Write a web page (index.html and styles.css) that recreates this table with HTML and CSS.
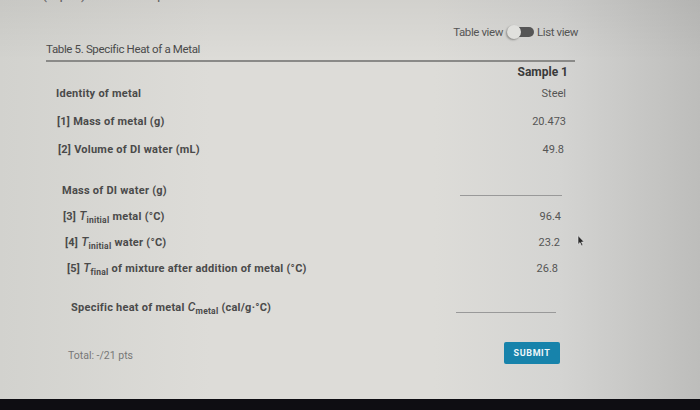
FILE: index.html
```html
<!DOCTYPE html>
<html>
<head>
<meta charset="utf-8">
<link rel="stylesheet" href="styles.css">
</head>
<body>
<div class="screen">
  <div class="cut-title">(4 pts) Table of Specific Heat of a Metal</div>
  <div class="toggle-row">
    <span class="toggle-label">Table view</span>
    <span class="switch"><span class="knob"></span></span>
    <span class="toggle-label">List view</span>
  </div>
  <div class="caption">Table 5. Specific Heat of a Metal</div>
  <div class="table">
    <div class="row head"><span class="label"></span><span class="value bold">Sample 1</span></div>
    <div class="group a">
      <div class="row r1"><span class="label">Identity of metal</span><span class="value">Steel</span></div>
      <div class="row r2"><span class="label">[1] Mass of metal (g)</span><span class="value">20.473</span></div>
      <div class="row r3"><span class="label">[2] Volume of DI water (mL)</span><span class="value">49.8</span></div>
    </div>
    <div class="group b">
      <div class="row r4"><span class="label">Mass of DI water (g)</span><span class="value"><span class="blank w102"></span></span></div>
      <div class="row r5"><span class="label">[3] <i>T</i><sub>initial</sub> metal (°C)</span><span class="value">96.4</span></div>
      <div class="row r6"><span class="label">[4] <i>T</i><sub>initial</sub> water (°C)</span><span class="value">23.2<svg class="cursor" width="8" height="12" viewBox="0 0 8 12"><path d="M1 0.5 L1 9.5 L3 7.6 L4.6 11 L6 10.3 L4.5 7 L7.2 7 Z" fill="#2a2a2a" stroke="#eee" stroke-width="0.6"/></svg></span></div>
      <div class="row r7"><span class="label">[5] <i>T</i><sub>final</sub> of mixture after addition of metal (°C)</span><span class="value">26.8</span></div>
    </div>
    <div class="group c">
      <div class="row r8"><span class="label">Specific heat of metal <i>C</i><sub>metal</sub> (cal/g·°C)</span><span class="value"><span class="blank w100"></span></span></div>
    </div>
    <div class="footer">
      <span class="total">Total: -/21 pts</span>
      <button class="submit">SUBMIT</button>
    </div>
  </div>
</div>
<div class="bezel"></div>
</body>
</html>
```
FILE: styles.css
```css
html, body {
  margin: 0;
  padding: 0;
  width: 700px;
  height: 410px;
  overflow: hidden;
  background: #0e0d12;
  font-family: Roboto, "Liberation Sans", sans-serif;
}
.screen {
  height: 399px;
  overflow: hidden;
  background:
    linear-gradient(to bottom, rgba(0,0,0,0.05), rgba(0,0,0,0) 60px),
    linear-gradient(to right, #d2d2ce 0%, #dddcd8 30%, #dddcd8 62%, #d4d4d2 80%, #bdbdbb 100%);
  box-sizing: border-box;
  padding-left: 46px;
  position: relative;
}
.cut-title {
  font-size: 14.5px;
  color: #666;
  margin-top: -13px;
  margin-left: -4px;
  height: 15px;
  line-height: 15px;
  letter-spacing: 0.3px;
}
.toggle-row {
  display: flex;
  align-items: center;
  justify-content: flex-end;
  width: 532px;
  height: 16px;
  margin-top: 22px;
  gap: 1px;
}
.toggle-label {
  font-size: 11.5px;
  color: #555;
  letter-spacing: -0.4px;
}
.switch {
  position: relative;
  width: 22px;
  height: 10px;
  border-radius: 5px;
  background: #555;
  margin: 0 2px 0 8px;
}
.knob {
  position: absolute;
  left: -5px;
  top: -2px;
  width: 14px;
  height: 14px;
  border-radius: 50%;
  background: #e0e0dd;
  box-shadow: -1px 1px 2px rgba(0,0,0,0.35);
}
.caption {
  width: 529px;
  font-size: 11.5px;
  color: #4a4a4a;
  letter-spacing: -0.35px;
  height: 18px;
  line-height: 14px;
  padding-top: 2px;
  border-bottom: 2px solid #8a8a88;
  box-sizing: content-box;
}
.table {
  width: 529px;
}
.group {
  display: flex;
  flex-direction: column;
}
.group.a { gap: 8px; margin-top: 1px; }
.group.b { gap: 6px; margin-top: 21px; }
.group.c { margin-top: 19px; }
.row {
  display: flex;
  align-items: center;
  justify-content: space-between;
  height: 20px;
  font-size: 11px;
}
.label {
  color: #4a4a4a;
  font-weight: 700;
  letter-spacing: 0.25px;
}
.label i {
  font-style: italic;
  font-weight: 500;
  font-size: 12px;
}
.label sub {
  font-size: 8.5px;
  vertical-align: -3px;
  line-height: 0;
}
.value {
  color: #555;
  font-size: 11px;
  text-align: right;
  position: relative;
}
.value.bold {
  font-weight: 700;
  color: #3a3a3a;
  font-size: 12px;
  margin-right: 7px;
}
.blank {
  display: inline-block;
  height: 1px;
  background: #999;
  vertical-align: middle;
}
.w102 { width: 102px; margin-top: 10px; }
.w100 { width: 100px; margin-top: 10px; }
.r1 { padding-left: 10px; padding-right: 9px; }
.r2 { padding-left: 11px; padding-right: 9px; }
.r3 { padding-left: 12px; padding-right: 11px; }
.r4 { padding-left: 16px; padding-right: 13px; }
.r5 { padding-left: 17px; padding-right: 14px; }
.r6 { padding-left: 19px; padding-right: 15px; }
.r7 { padding-left: 21px; padding-right: 17px; }
.r8 { padding-left: 25px; padding-right: 19px; }
.cursor {
  position: absolute;
  left: 38px;
  top: -1px;
}
.footer {
  display: flex;
  align-items: center;
  justify-content: space-between;
  margin-top: 25px;
  padding-left: 22px;
  padding-right: 15px;
  height: 22px;
}
.total {
  font-size: 10.5px;
  color: #777;
  margin-top: 4px;
}
.submit {
  font-family: Roboto, "Liberation Sans", sans-serif;
  background: #1783ab;
  color: #eef6fa;
  border: none;
  border-radius: 2px;
  font-size: 9px;
  font-weight: 700;
  letter-spacing: 0.6px;
  width: 56px;
  height: 22px;
  padding: 0;
}
.bezel {
  height: 11px;
  background: #0e0d12;
}
```
